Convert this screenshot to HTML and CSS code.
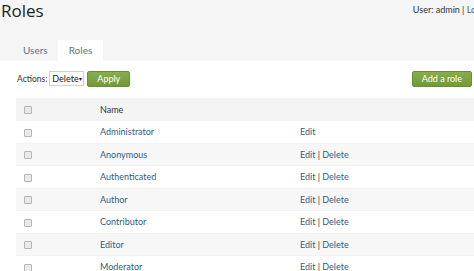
FILE: index.html
```html
<!DOCTYPE html>
<html>
<head>
<meta charset="utf-8">
<link rel="stylesheet" href="styles.css">
</head>
<body>
<div class="page">
  <header class="header">
    <div class="head-top">
      <h1 class="title">Roles</h1>
      <div class="user">User: admin | <a href="#">Logout</a></div>
    </div>
    <nav class="tabs">
      <a class="tab" href="#">Users</a>
      <a class="tab active" href="#">Roles</a>
    </nav>
  </header>
  <main class="content">
    <div class="actions">
      <div class="actions-left">
        <span class="label">Actions:</span>
        <span class="select">Delete <span class="caret">&#9662;</span></span>
        <button class="btn">Apply</button>
      </div>
      <button class="btn">Add a role</button>
    </div>
    <table class="grid">
      <thead>
        <tr><th class="c-check"><span class="cb"></span></th><th class="c-name">Name</th><th class="c-ops"></th></tr>
      </thead>
      <tbody>
        <tr><td class="c-check"><span class="cb"></span></td><td><a href="#">Administrator</a></td><td><a href="#">Edit</a></td></tr>
        <tr><td class="c-check"><span class="cb"></span></td><td><a href="#">Anonymous</a></td><td><a href="#">Edit</a> | <a href="#">Delete</a></td></tr>
        <tr><td class="c-check"><span class="cb"></span></td><td><a href="#">Authenticated</a></td><td><a href="#">Edit</a> | <a href="#">Delete</a></td></tr>
        <tr><td class="c-check"><span class="cb"></span></td><td><a href="#">Author</a></td><td><a href="#">Edit</a> | <a href="#">Delete</a></td></tr>
        <tr><td class="c-check"><span class="cb"></span></td><td><a href="#">Contributor</a></td><td><a href="#">Edit</a> | <a href="#">Delete</a></td></tr>
        <tr><td class="c-check"><span class="cb"></span></td><td><a href="#">Editor</a></td><td><a href="#">Edit</a> | <a href="#">Delete</a></td></tr>
        <tr><td class="c-check"><span class="cb"></span></td><td><a href="#">Moderator</a></td><td><a href="#">Edit</a> | <a href="#">Delete</a></td></tr>
      </tbody>
    </table>
  </main>
</div>
</body>
</html>
```
FILE: styles.css
```css
html, body {
  margin: 0;
  padding: 0;
  background: #fff;
  overflow: hidden;
}
body {
  font-family: Lato, "Open Sans", sans-serif;
  font-size: 9px;
  color: #333;
}
a { color: #2f5d86; text-decoration: none; }
.page { width: 474px; }
.header {
  background: #f5f5f5;
  height: 61px;
  display: flex;
  flex-direction: column;
  justify-content: space-between;
}
.head-top {
  display: flex;
  justify-content: space-between;
  align-items: flex-start;
}
.title {
  margin: 0;
  padding: 1px 0 0 1px;
  font-family: "Open Sans", sans-serif;
  font-weight: 400;
  font-size: 17px;
  line-height: 19px;
  color: #222;
}
.user {
  white-space: nowrap;
  padding-top: 4px;
  flex-shrink: 0;
  margin-right: -20px;
}
.tabs {
  display: flex;
  padding-left: 13px;
}
.tab {
  display: block;
  padding: 0 10px;
  height: 21px;
  line-height: 21px;
  font-size: 10px;
  color: #5b7184;
}
.tab.active {
  background: #fff;
  color: #5b7a6a;
  padding: 0 11px;
}
.content { padding: 10px 2px 0 17px; }
.actions {
  display: flex;
  justify-content: space-between;
  align-items: center;
  height: 15px;
}
.actions-left { display: flex; align-items: center; }
.label { margin-right: 2px; font-size: 8.5px; }
.select {
  display: inline-flex;
  align-items: center;
  justify-content: space-between;
  height: 13px;
  width: 29px;
  border: 1px solid #cfcfcf;
  background: #fff;
  padding: 0 2px;
  margin-right: 3px;
  color: #222;
}
.caret { font-size: 6px; }
.btn {
  font-family: inherit;
  font-size: 9px;
  color: #fff;
  background: linear-gradient(#88ad4c, #739a38);
  border: 1px solid #6a8e34;
  border-radius: 2px;
  height: 16px;
  padding: 0 9px;
  line-height: 14px;
}
.grid {
  margin-top: 12px;
  margin-left: -1px;
  width: 470px;
  border-collapse: collapse;
}
.grid th, .grid td {
  height: 21.5px;
  padding: 0;
  text-align: left;
  font-weight: 400;
  border-bottom: 1px solid #f2f2f2;
}
.grid thead th { background: #f4f4f4; height: 22px; color: #333; }
.grid tbody tr:nth-child(even) td { background: #f7f7f7; }
.c-check { width: 76px; padding-left: 8px !important; }
.c-name { width: 200px; }
.cb {
  display: inline-block;
  width: 6px;
  height: 6px;
  border: 1px solid #b5b5b5;
  border-radius: 1px;
  background: #e9e9e9;
  vertical-align: middle;
}
```
